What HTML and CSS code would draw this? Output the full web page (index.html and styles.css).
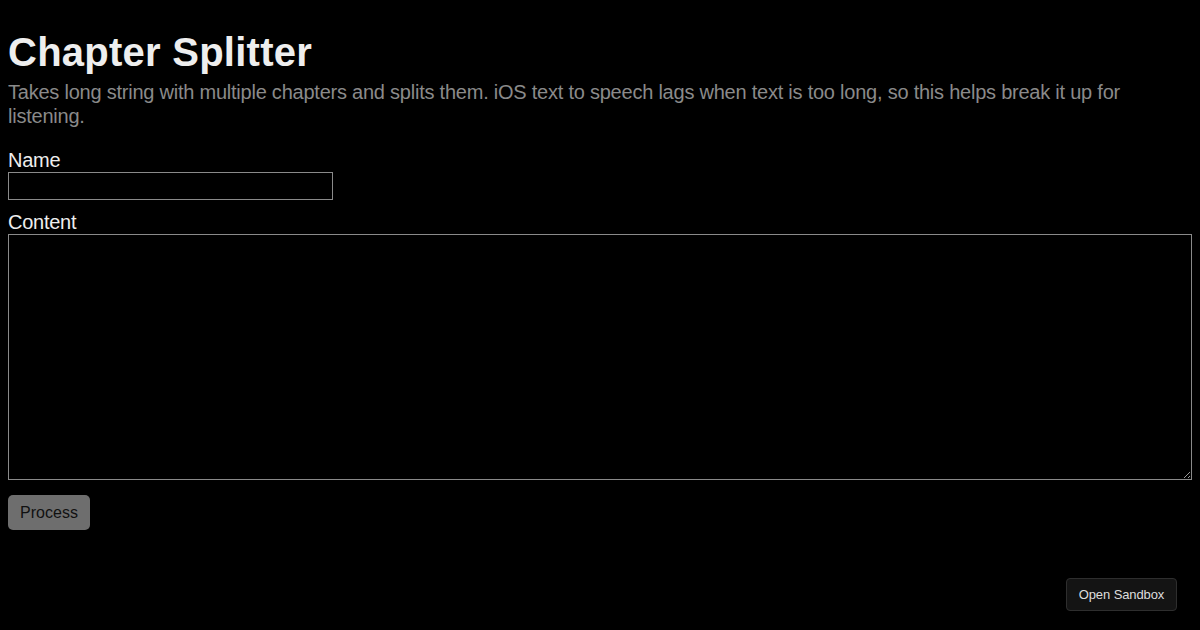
FILE: index.html
```html
<!DOCTYPE html>
<html>
<head>
<meta charset="utf-8">
<link rel="stylesheet" href="styles.css">
</head>
<body>
<main class="app">
  <h1 class="title">Chapter Splitter</h1>
  <p class="desc">Takes long string with multiple chapters and splits them. iOS text to speech lags when text is too long, so this helps break it up for listening.</p>
  <form class="form">
    <label class="label" for="name">Name</label>
    <input class="name-input" id="name" type="text">
    <label class="label label-content" for="content">Content</label>
    <textarea class="content-input" id="content"></textarea>
    <div class="actions"><button type="button" class="process">Process</button></div>
  </form>
</main>
<button type="button" class="sandbox">Open Sandbox</button>
</body>
</html>
```
FILE: styles.css
```css
html, body {
  background: #000;
}
body {
  margin: 8px;
  font-family: "Liberation Sans", Arial, sans-serif;
  color: #eee;
}
.title {
  font-size: 40px;
  line-height: 48px;
  font-weight: bold;
  letter-spacing: 0.25px;
  margin: 20px 0 4px;
  color: #eee;
}
.desc {
  font-size: 20px;
  line-height: 24px;
  letter-spacing: -0.23px;
  color: #8a8a8a;
  margin: 0 0 20px;
}
.form {
  display: flex;
  flex-direction: column;
  align-items: flex-start;
}
.label {
  display: block;
  font-size: 20px;
  line-height: 24px;
  letter-spacing: -0.25px;
  color: #eee;
}
.label-content {
  margin-top: 10px;
}
.name-input {
  box-sizing: border-box;
  width: 325px;
  height: 28px;
  margin: 0;
  background: #000;
  border: 1px solid #8a8a8a;
  color: #eee;
  font-size: 16px;
  padding: 2px 4px;
}
.content-input {
  box-sizing: border-box;
  width: 100%;
  height: 246px;
  margin: 0;
  background: #000;
  border: 1px solid #8a8a8a;
  color: #eee;
  font-size: 16px;
  padding: 2px;
  display: block;
}
.actions {
  margin-top: 15px;
}
.process {
  box-sizing: border-box;
  height: 35px;
  width: 82px;
  padding: 0;
  background: #6e6e6e;
  color: #111;
  border: none;
  border-radius: 5px;
  font-family: "Liberation Sans", Arial, sans-serif;
  font-size: 16px;
}
.sandbox {
  position: fixed;
  right: 23px;
  bottom: 19px;
  box-sizing: border-box;
  height: 33px;
  width: 111px;
  padding: 0;
  background: #141414;
  color: #ddd;
  border: 1px solid #2e2e2e;
  border-radius: 4px;
  font-family: "Liberation Sans", Arial, sans-serif;
  font-size: 13px;
  letter-spacing: -0.1px;
}
```
